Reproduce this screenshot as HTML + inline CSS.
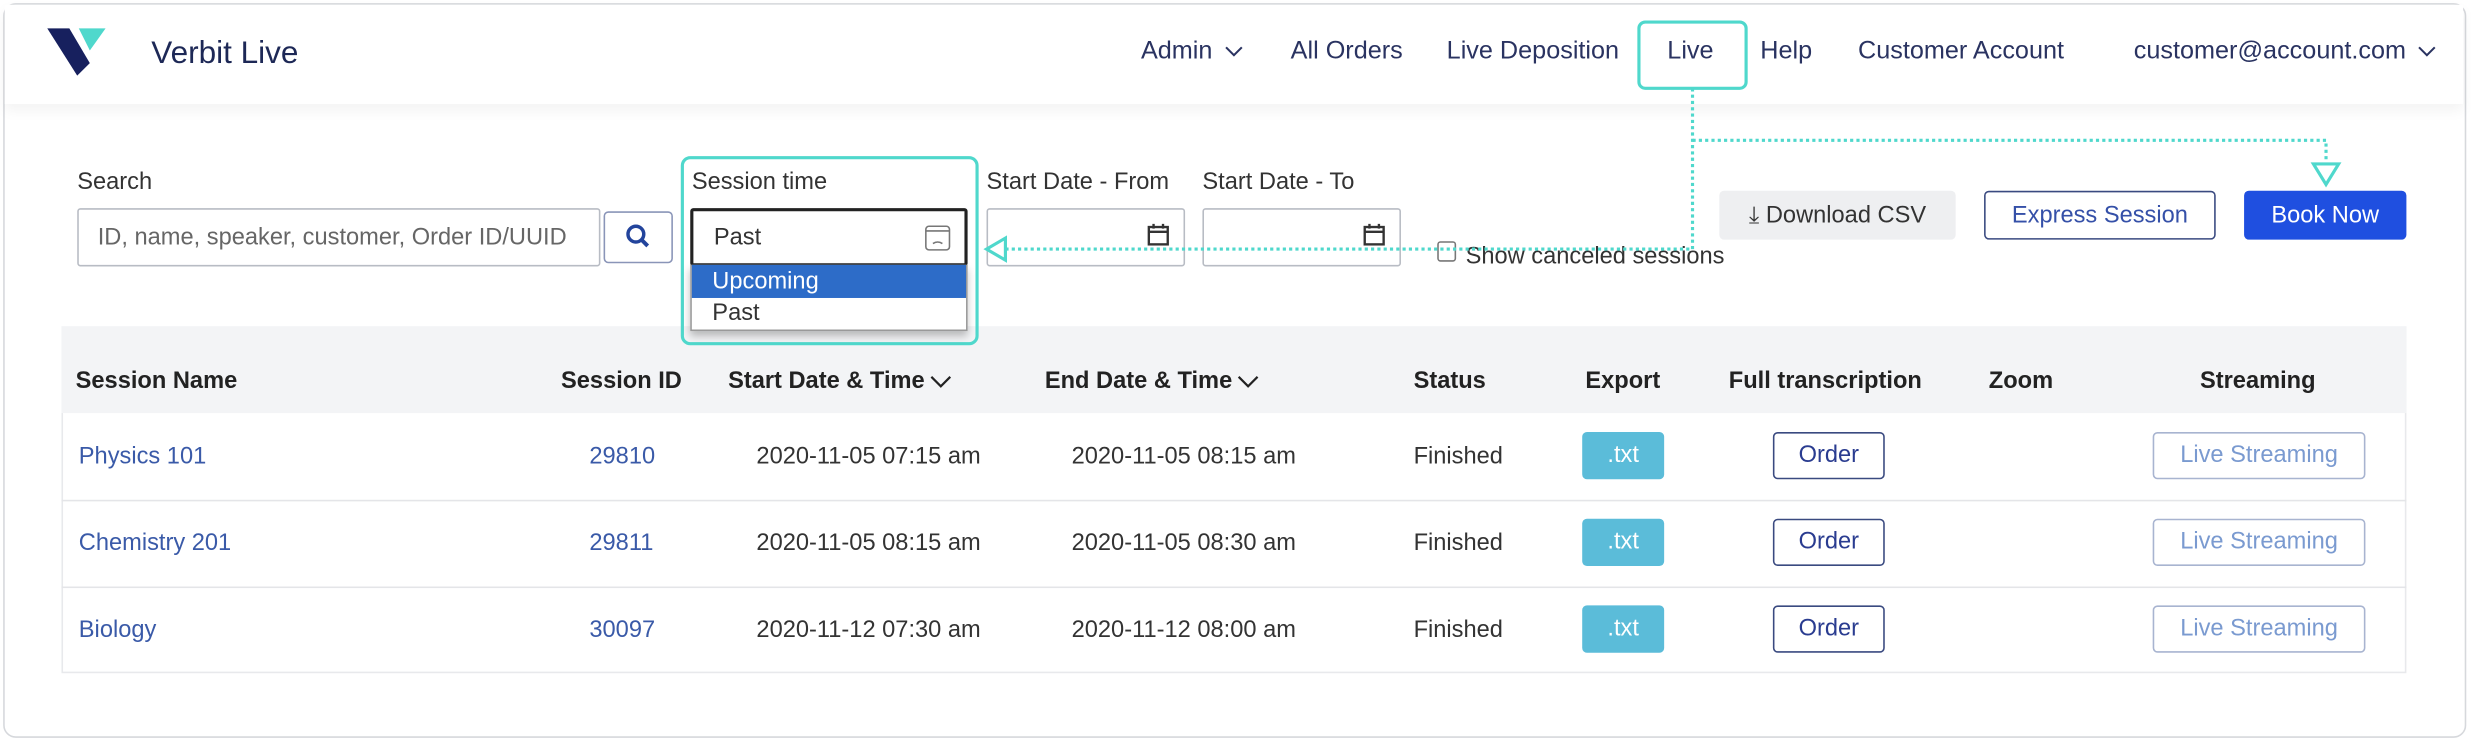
<!DOCTYPE html>
<html><head><meta charset="utf-8"><style>
html,body{margin:0;padding:0;background:#fff;overflow:hidden}
body{width:2471px;height:741px;font-family:"Liberation Sans",Arial,sans-serif}
#w{position:absolute;left:0;top:0;width:1568px;height:470px;transform:scale(1.5759,1.5766);transform-origin:0 0}
.a{position:absolute;white-space:nowrap}
.frame{left:2px;top:2px;width:1561px;height:464px;border:1px solid #d6d8dc;border-radius:8px;background:#fff}
.hdr{left:3px;top:3px;width:1560px;height:63px;background:#fff;box-shadow:0 4px 8px rgba(0,0,0,0.05)}
.nav{font-size:16px;color:#2a3361;top:24px}
.lbl{font-size:15px;color:#333;top:107px}
.inp{border:1px solid #b8bcc4;border-radius:2px;background:#fff;box-sizing:border-box}
.th{font-size:15px;font-weight:bold;color:#222;top:233px}
.td{font-size:15px;color:#333}
.lnk{color:#3a5aa8}
.btn{box-sizing:border-box;border-radius:3px;font-size:15px;text-align:center}
.chev{display:inline-block;vertical-align:middle;margin-left:3px}
</style></head><body><div id="w">
<div class="a frame"></div>
<div class="a hdr"></div>
<svg class="a" style="left:28px;top:16px" width="42" height="34" viewBox="28 16 42 34"><polygon points="30,18 44,18 57,40 49,48" fill="#17205e"/><polygon points="50,18 67,18 57,32" fill="#4fd8cc"/></svg>
<div class="a" style="left:96px;top:23px;font-size:20px;color:#1d2856">Verbit Live</div>
<div class="a nav" style="left:724px">Admin <svg class="chev" width="12" height="8" viewBox="0 0 12 8"><path d="M1 1l5 5 5-5" fill="none" stroke="#2a3361" stroke-width="1.3"/></svg></div>
<div class="a nav" style="left:819px">All Orders</div>
<div class="a nav" style="left:918px">Live Deposition</div>
<div class="a nav" style="left:1058px">Live</div>
<div class="a nav" style="left:1117px">Help</div>
<div class="a nav" style="left:1179px">Customer Account</div>
<div class="a nav" style="left:1354px">customer@account.com <svg class="chev" width="12" height="8" viewBox="0 0 12 8"><path d="M1 1l5 5 5-5" fill="none" stroke="#2a3361" stroke-width="1.3"/></svg></div>
<div class="a" style="left:1039px;top:13px;width:66px;height:40px;border:2.5px solid #4fd8cc;border-radius:5px"></div>

<div class="a lbl" style="left:49px">Search</div>
<div class="a inp" style="left:49px;top:132px;width:332px;height:37px"></div>
<div class="a" style="left:62px;top:142px;font-size:15px;color:#666;width:312px;overflow:hidden">ID, name, speaker, customer, Order ID/UUID</div>
<div class="a inp" style="left:383px;top:134px;width:44px;height:33px;border-color:#8a95b8;border-radius:3px"></div>
<svg class="a" style="left:396px;top:141px" width="18" height="18" viewBox="0 0 18 18"><circle cx="7.5" cy="7.5" r="5" fill="none" stroke="#23449c" stroke-width="2.2"/><line x1="11" y1="11" x2="15" y2="15" stroke="#23449c" stroke-width="2.5"/></svg>

<div class="a lbl" style="left:439px">Session time</div>
<div class="a lbl" style="left:626px">Start Date - From</div>
<div class="a inp" style="left:626px;top:132px;width:126px;height:37px"></div>
<div class="a lbl" style="left:763px">Start Date - To</div>
<div class="a inp" style="left:763px;top:132px;width:126px;height:37px"></div>
<svg class="a" style="left:727px;top:141px" width="16" height="16" viewBox="0 0 16 16"><rect x="2" y="3" width="12" height="11" fill="none" stroke="#333" stroke-width="1.5"/><line x1="2" y1="6" x2="14" y2="6" stroke="#333" stroke-width="1.5"/><line x1="5" y1="1" x2="5" y2="4" stroke="#333" stroke-width="1.5"/><line x1="11" y1="1" x2="11" y2="4" stroke="#333" stroke-width="1.5"/></svg>
<svg class="a" style="left:864px;top:141px" width="16" height="16" viewBox="0 0 16 16"><rect x="2" y="3" width="12" height="11" fill="none" stroke="#333" stroke-width="1.5"/><line x1="2" y1="6" x2="14" y2="6" stroke="#333" stroke-width="1.5"/><line x1="5" y1="1" x2="5" y2="4" stroke="#333" stroke-width="1.5"/><line x1="11" y1="1" x2="11" y2="4" stroke="#333" stroke-width="1.5"/></svg>
<div class="a" style="left:912px;top:153px;width:10px;height:11px;border:1px solid #777;border-radius:2px"></div>
<div class="a" style="left:930px;top:154px;font-size:15px;color:#333">Show canceled sessions</div>

<svg class="a" style="left:0;top:0" width="1568" height="470"><g fill="none" stroke="#4fd8cc" stroke-width="2" stroke-dasharray="2 2"><path d="M1074 56V158H636"/><path d="M1074 89H1476V103"/></g><polygon points="1468,104 1484,104 1476,117" fill="#fff" stroke="#4fd8cc" stroke-width="2"/><polygon points="638,151 638,165 626,158" fill="#fff" stroke="#4fd8cc" stroke-width="2"/></svg>

<div class="a btn" style="left:1091px;top:121px;width:150px;height:31px;background:#eeeff1;color:#333;line-height:31px">&#10515; Download CSV</div>
<div class="a btn" style="left:1259px;top:121px;width:147px;height:31px;border:1px solid #3a4a80;color:#3550a8;line-height:29px">Express Session</div>
<div class="a btn" style="left:1424px;top:121px;width:103px;height:31px;background:#1f4fe0;color:#fff;line-height:31px">Book Now</div>

<div class="a" style="left:39px;top:207px;width:1488px;height:220px;border:1px solid #e8e9ec;box-sizing:border-box"></div>
<div class="a" style="left:39px;top:207px;width:1488px;height:55px;background:#f3f4f6"></div>
<div class="a" style="left:39px;top:317px;width:1488px;height:1px;background:#e4e5e8"></div>
<div class="a" style="left:39px;top:372px;width:1488px;height:1px;background:#e4e5e8"></div>
<div class="a th" style="left:48px">Session Name</div>
<div class="a th" style="left:356px">Session ID</div>
<div class="a th" style="left:462px">Start Date &amp; Time<svg class="chev" width="14" height="9" viewBox="0 0 14 9"><path d="M1 1l6 6 6-6" fill="none" stroke="#222" stroke-width="1.4"/></svg></div>
<div class="a th" style="left:663px">End Date &amp; Time<svg class="chev" width="14" height="9" viewBox="0 0 14 9"><path d="M1 1l6 6 6-6" fill="none" stroke="#222" stroke-width="1.4"/></svg></div>
<div class="a th" style="left:897px">Status</div>
<div class="a th" style="left:1006px">Export</div>
<div class="a th" style="left:1097px">Full transcription</div>
<div class="a th" style="left:1262px">Zoom</div>
<div class="a th" style="left:1396px">Streaming</div>

<div class="a td lnk" style="left:50px;top:281px">Physics 101</div>
<div class="a td lnk" style="left:374px;top:281px">29810</div>
<div class="a td" style="left:480px;top:281px">2020-11-05 07:15 am</div>
<div class="a td" style="left:680px;top:281px">2020-11-05 08:15 am</div>
<div class="a td" style="left:897px;top:281px">Finished</div>

<div class="a td lnk" style="left:50px;top:336px">Chemistry 201</div>
<div class="a td lnk" style="left:374px;top:336px">29811</div>
<div class="a td" style="left:480px;top:336px">2020-11-05 08:15 am</div>
<div class="a td" style="left:680px;top:336px">2020-11-05 08:30 am</div>
<div class="a td" style="left:897px;top:336px">Finished</div>

<div class="a td lnk" style="left:50px;top:391px">Biology</div>
<div class="a td lnk" style="left:374px;top:391px">30097</div>
<div class="a td" style="left:480px;top:391px">2020-11-12 07:30 am</div>
<div class="a td" style="left:680px;top:391px">2020-11-12 08:00 am</div>
<div class="a td" style="left:897px;top:391px">Finished</div>

<div class="a btn" style="left:1004px;top:274px;width:52px;height:30px;background:#5bbcd9;color:#fff;line-height:30px">.txt</div>
<div class="a btn" style="left:1004px;top:329px;width:52px;height:30px;background:#5bbcd9;color:#fff;line-height:30px">.txt</div>
<div class="a btn" style="left:1004px;top:384px;width:52px;height:30px;background:#5bbcd9;color:#fff;line-height:30px">.txt</div>
<div class="a btn" style="left:1125px;top:274px;width:71px;height:30px;border:1px solid #3a4a80;color:#2a3c90;line-height:28px">Order</div>
<div class="a btn" style="left:1125px;top:329px;width:71px;height:30px;border:1px solid #3a4a80;color:#2a3c90;line-height:28px">Order</div>
<div class="a btn" style="left:1125px;top:384px;width:71px;height:30px;border:1px solid #3a4a80;color:#2a3c90;line-height:28px">Order</div>
<div class="a btn" style="left:1366px;top:274px;width:135px;height:30px;border:1px solid #a8b4d0;color:#7a9ad0;line-height:28px">Live Streaming</div>
<div class="a btn" style="left:1366px;top:329px;width:135px;height:30px;border:1px solid #a8b4d0;color:#7a9ad0;line-height:28px">Live Streaming</div>
<div class="a btn" style="left:1366px;top:384px;width:135px;height:30px;border:1px solid #a8b4d0;color:#7a9ad0;line-height:28px">Live Streaming</div>

<div class="a" style="left:432px;top:99px;width:185px;height:116px;border:2.5px solid #4fd8cc;border-radius:6px"></div>
<div class="a inp" style="left:438px;top:132px;width:176px;height:37px;border:2px solid #222"></div>
<div class="a" style="left:453px;top:142px;font-size:15px;color:#333">Past</div>
<svg class="a" style="left:586px;top:142px" width="18" height="18" viewBox="0 0 18 18"><rect x="1.5" y="1.5" width="15" height="15" rx="2" fill="none" stroke="#777"/><line x1="1.5" y1="4.5" x2="16.5" y2="4.5" stroke="#777"/><path d="M6 12.5q3-2 6 0" fill="none" stroke="#777"/></svg>
<div class="a" style="left:438px;top:168px;width:176px;height:42px;border:1px solid #999;box-sizing:border-box;background:#fff;box-shadow:0 3px 5px rgba(0,0,0,0.25)"></div>
<div class="a" style="left:439px;top:168px;width:174px;height:21px;background:#2d6cc8"></div>
<div class="a" style="left:452px;top:170px;font-size:15px;color:#fff">Upcoming</div>
<div class="a" style="left:452px;top:190px;font-size:15px;color:#333">Past</div>
</div></body></html>
